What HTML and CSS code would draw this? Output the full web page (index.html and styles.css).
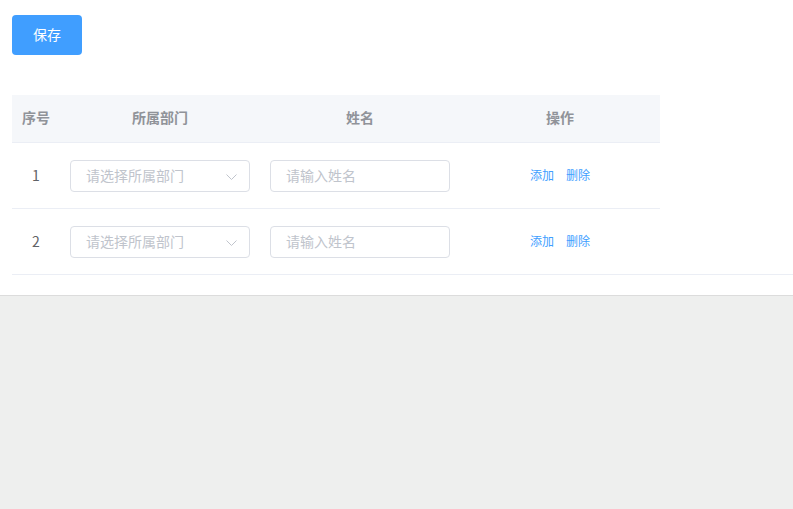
FILE: index.html
```html
<!DOCTYPE html>
<html lang="zh">
<head>
<meta charset="utf-8">
<link rel="stylesheet" href="styles.css">
</head>
<body>
<div class="page">
  <button class="btn-primary">保存</button>
  <div class="table">
    <div class="row head">
      <div class="cell">序号</div>
      <div class="cell">所属部门</div>
      <div class="cell">姓名</div>
      <div class="cell">操作</div>
    </div>
    <div class="row">
      <div class="cell num">1</div>
      <div class="cell">
        <div class="select"><span class="ph">请选择所属部门</span>
          <svg class="arrow" width="11" height="7" viewBox="0 0 11 7"><polyline points="0.5,0.5 5.5,5.5 10.5,0.5" fill="none" stroke="#c0c4cc" stroke-width="1"/></svg>
        </div>
      </div>
      <div class="cell"><div class="input"><span class="ph">请输入姓名</span></div></div>
      <div class="cell actions"><a>添加</a><a>删除</a></div>
    </div>
    <div class="row">
      <div class="cell num">2</div>
      <div class="cell">
        <div class="select"><span class="ph">请选择所属部门</span>
          <svg class="arrow" width="11" height="7" viewBox="0 0 11 7"><polyline points="0.5,0.5 5.5,5.5 10.5,0.5" fill="none" stroke="#c0c4cc" stroke-width="1"/></svg>
        </div>
      </div>
      <div class="cell"><div class="input"><span class="ph">请输入姓名</span></div></div>
      <div class="cell actions"><a>添加</a><a>删除</a></div>
    </div>
  </div>
</div>
</body>
</html>
```
FILE: styles.css
```css
* { box-sizing: border-box; }
html, body { margin: 0; padding: 0; }
body {
  background: #eeefee;
  font-family: "Noto Sans CJK SC", "Liberation Sans", sans-serif;
  font-size: 14px;
  color: #606266;
  height: 509px;
  overflow: hidden;
}
.page {
  background: #fff;
  height: 296px;
  padding: 15px 0 0 12px;
  border-bottom: 1px solid #dcdcdc;
}
.btn-primary {
  display: block;
  width: 70px;
  height: 40px;
  border: none;
  border-radius: 4px;
  background: #409eff;
  color: #fff;
  font-family: inherit;
  font-size: 14px;
  padding: 0 0 2px;
  line-height: 38px;
}
.table {
  margin-top: 40px;
  border-bottom: 1px solid #ebeef5;
}
.row {
  display: grid;
  grid-template-columns: 48px 200px 200px 200px;
  width: 648px;
  height: 66px;
  border-bottom: 1px solid #ebeef5;
  align-items: center;
}
.row:last-child { border-bottom: none; height: 65px; }
.row.head {
  height: 48px;
  background: #f5f7fa;
  color: #909399;
  font-weight: bold;
}
.row.head .cell { padding-bottom: 3px; }
.cell {
  text-align: center;
  padding: 0 10px;
  line-height: 20px;
}
.num { padding: 0 0 2px; }
.select, .input {
  position: relative;
  height: 32px;
  border: 1px solid #dcdfe6;
  border-radius: 4px;
  text-align: left;
  padding: 0 15px 2px;
  line-height: 28px;
}
.ph { color: #c0c4cc; }
.arrow {
  position: absolute;
  right: 12px;
  top: 13px;
}
.actions {
  display: flex;
  justify-content: center;
  gap: 12px;
  font-size: 12px;
  padding-bottom: 2px;
}
.actions a { color: #409eff; }
```
